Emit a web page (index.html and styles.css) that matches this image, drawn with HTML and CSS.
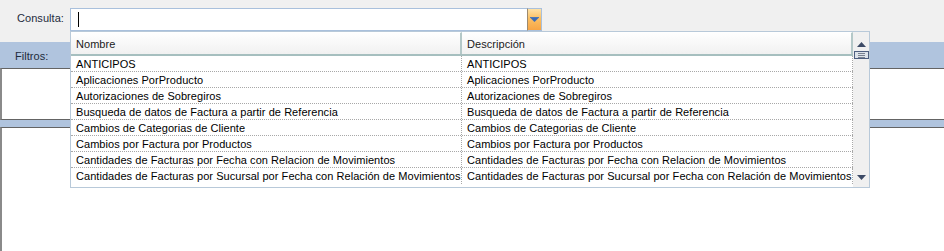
FILE: index.html
```html
<!DOCTYPE html>
<html>
<head>
<meta charset="utf-8">
<link rel="stylesheet" href="styles.css">
</head>
<body>
<div class="page">
  <div class="top">
    <span class="lbl">Consulta:</span>
    <div class="combo">
      <div class="input"><span class="caret"></span></div>
      <div class="btn"><svg width="9" height="6" viewBox="0 0 9 6"><rect x="0" y="0" width="9" height="1" fill="#4a78b8"/><polygon points="0.5,1 8.5,1 4.5,5" fill="#3c6cb4"/></svg></div>
      <div class="popup">
        <div class="grid">
          <div class="head">
            <div class="hcell c1">Nombre</div>
            <div class="hcell c2">Descripción</div>
          </div>
          <div class="row"><div class="cell c1">ANTICIPOS</div><div class="cell c2">ANTICIPOS</div></div>
          <div class="row"><div class="cell c1">Aplicaciones PorProducto</div><div class="cell c2">Aplicaciones PorProducto</div></div>
          <div class="row"><div class="cell c1">Autorizaciones de Sobregiros</div><div class="cell c2">Autorizaciones de Sobregiros</div></div>
          <div class="row"><div class="cell c1">Busqueda de datos de Factura a partir de Referencia</div><div class="cell c2">Busqueda de datos de Factura a partir de Referencia</div></div>
          <div class="row"><div class="cell c1">Cambios de Categorias de Cliente</div><div class="cell c2">Cambios de Categorias de Cliente</div></div>
          <div class="row"><div class="cell c1">Cambios por Factura por Productos</div><div class="cell c2">Cambios por Factura por Productos</div></div>
          <div class="row"><div class="cell c1">Cantidades de Facturas por Fecha con Relacion de Movimientos</div><div class="cell c2">Cantidades de Facturas por Fecha con Relacion de Movimientos</div></div>
          <div class="row last"><div class="cell c1">Cantidades de Facturas por Sucursal por Fecha con Relación de Movimientos</div><div class="cell c2">Cantidades de Facturas por Sucursal por Fecha con Relación de Movimientos</div></div>
        </div>
        <div class="sbar">
          <svg class="up" width="9" height="5" viewBox="0 0 9 5"><polygon points="0,5 9,5 4.5,0" fill="#3c4a66"/></svg>
          <div class="thumb"><i></i><i></i><i></i></div>
          <div class="spacer"></div>
          <svg class="down" width="9" height="5" viewBox="0 0 9 5"><polygon points="0,0 9,0 4.5,5" fill="#3c4a66"/></svg>
        </div>
      </div>
    </div>
  </div>
  <div class="band1"><span class="lbl">Filtros:</span></div>
  <div class="filterbox"></div>
  <div class="band2"></div>
  <div class="results"></div>
</div>
</body>
</html>
```
FILE: styles.css
```css
html, body {
  margin: 0;
  padding: 0;
  background: #f0f0f0;
}
.page {
  width: 944px;
  height: 251px;
  overflow: hidden;
  font-family: "Liberation Sans", Arial, sans-serif;
  font-size: 11px;
  letter-spacing: 0.05px;
  display: flex;
  flex-direction: column;
}
.top {
  height: 42px;
  display: flex;
  align-items: flex-start;
  box-sizing: border-box;
  padding-top: 8px;
}
.lbl {
  color: #1e2b3c;
  font-size: 11px;
}
.top .lbl {
  flex: 0 0 70px;
  box-sizing: border-box;
  padding-left: 17px;
  text-align: left;
  line-height: 21px;
}
.combo {
  position: relative;
  display: flex;
  width: 472px;
  height: 23px;
}
.input {
  flex: 1;
  background: #fff;
  border: 1px solid #a9c0dc;
  border-right: none;
  position: relative;
}
.caret {
  position: absolute;
  left: 7px;
  top: 3px;
  width: 1px;
  height: 15px;
  background: #000;
}
.btn {
  width: 13px;
  border: 1px solid #a9c0dc;
  border-left: 1px solid #9c8a70;
  background: linear-gradient(#fde2a8 0%, #fbc064 45%, #f7a545 100%);
  display: flex;
  align-items: center;
  justify-content: center;
}
.popup {
  position: absolute;
  left: 0;
  top: 23px;
  width: 798px;
  height: 155px;
  border: 1px solid #b8c9d9;
  background: #fff;
  display: flex;
  z-index: 5;
}
.grid {
  width: 782px;
  display: flex;
  flex-direction: column;
}
.head {
  display: flex;
  height: 24px;
  box-sizing: border-box;
  border-bottom: 2px solid #a6bfbf;
  background: linear-gradient(#ffffff, #f1f1f1);
}
.hcell {
  box-sizing: border-box;
  padding-left: 5px;
  line-height: 22px;
  color: #1b1b1b;
  border-right: 2px solid #b4c8c8;
  border-top: 1px solid #fff;
}
.c1 { width: 391px; }
.c2 { width: 391px; }
.row {
  display: flex;
  height: 16px;
  box-sizing: border-box;
  border-bottom: 1px dotted #a8a8a8;
}
.row.last { border-bottom: none; }
.cell {
  box-sizing: border-box;
  padding-left: 5px;
  line-height: 16px;
  white-space: nowrap;
  overflow: hidden;
  color: #000;
}
.cell.c1 { border-right: 1px dotted #a8a8a8; }
.cell.c2 { border-right: 1px dotted #a8a8a8; }
.sbar {
  flex: 1;
  background: #f0f0f0;
  display: flex;
  flex-direction: column;
  align-items: center;
  padding-top: 10px;
}
.up { display: block; }
.thumb {
  margin-top: 4px;
  width: 13px;
  height: 6px;
  border: 1px solid #4e5f80;
  background: #dde3ea;
  display: flex;
  flex-direction: column;
  justify-content: center;
  gap: 1px;
  align-items: center;
}
.thumb i {
  display: block;
  width: 7px;
  height: 1px;
  background: #7a8290;
}
.spacer { flex: 1; }
.down { display: block; margin-bottom: 7px; }
.band1 {
  height: 26px;
  background: #b0c4de;
  box-sizing: border-box;
  padding-left: 15px;
  padding-top: 1px;
  display: flex;
  align-items: center;
}
.filterbox {
  height: 52px;
  box-sizing: border-box;
  background: #fff;
  border-top: 1px solid #646464;
  border-bottom: 1px solid #646464;
  border-left: 2px solid #8a8a8a;
}
.band2 {
  height: 7px;
  background: #b0c4de;
}
.results {
  flex: 1;
  background: #fff;
  border-top: 1px solid #646464;
  border-left: 2px solid #8a8a8a;
}
```
